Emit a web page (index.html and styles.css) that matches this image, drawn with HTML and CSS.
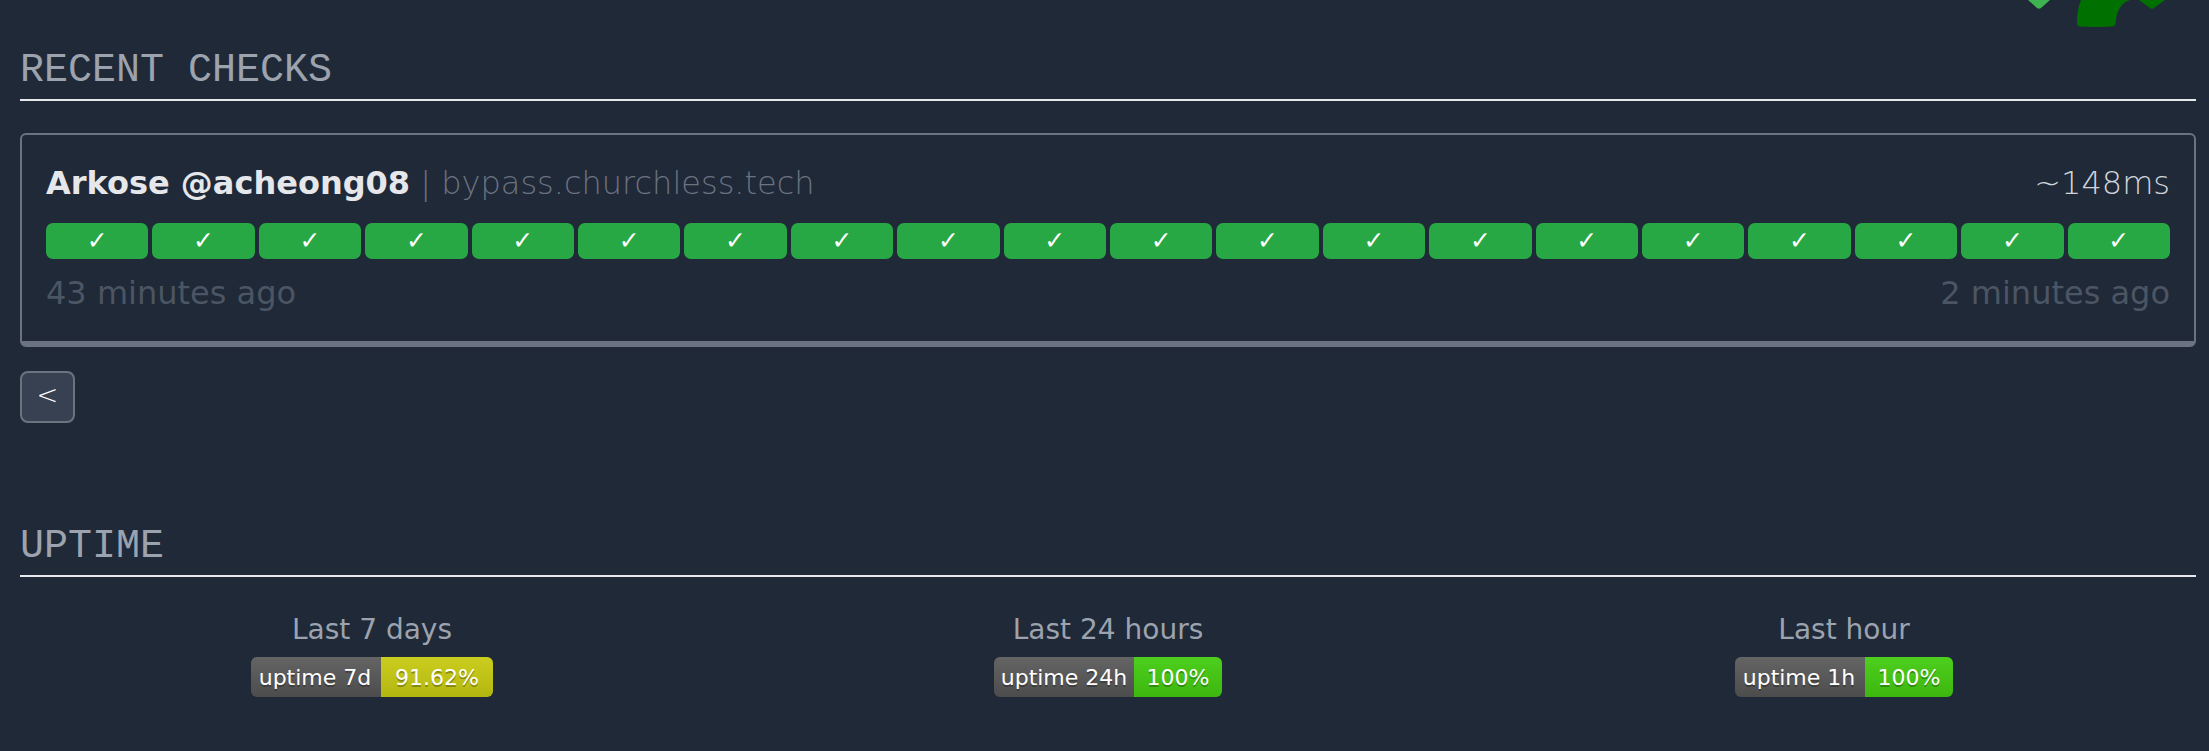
FILE: index.html
```html
<!DOCTYPE html>
<html lang="en">
<head>
    <meta charset="UTF-8">
    <title>Health Dashboard</title>
    <link rel="stylesheet" href="styles.css">
</head>
<body>
    <div class="logo-strip">
        <svg class="logo" viewBox="0 0 176 27" width="176" height="27">
            <path class="logo-light" d="M8 0 L17 8 Q19 9.500 21 8 L30 0 Z"/>
            <path class="logo-dark" d="M61 0 Q57 9 57 23 Q57 26.500 60 26.600 Q78 27.500 92 26.500 Q95.500 26 95.700 23 Q96 11 103 4 Q106 1 110 0 Z"/>
            <path class="logo-dark" d="M119 0 L130 8 Q132 9.500 134 8 L145 0 Z"/>
        </svg>
    </div>

    <h2 class="section-title">RECENT CHECKS</h2>
    <div class="card">
        <div class="card-head">
            <div><span class="name">Arkose @acheong08</span> <span class="sep">|</span> <span class="host">bypass.churchless.tech</span></div>
            <div class="latency">~148ms</div>
        </div>
        <div class="checks">
            <span>✓</span><span>✓</span><span>✓</span><span>✓</span><span>✓</span>
            <span>✓</span><span>✓</span><span>✓</span><span>✓</span><span>✓</span>
            <span>✓</span><span>✓</span><span>✓</span><span>✓</span><span>✓</span>
            <span>✓</span><span>✓</span><span>✓</span><span>✓</span><span>✓</span>
        </div>
        <div class="card-foot">
            <div>43 minutes ago</div>
            <div>2 minutes ago</div>
        </div>
    </div>
    <button class="page-btn">&lt;</button>

    <h2 class="section-title uptime-title">UPTIME</h2>
    <div class="uptime">
        <div class="uptime-col">
            <div class="uptime-label">Last 7 days</div>
            <div class="badge"><span class="badge-l badge-7d">uptime 7d</span><span class="badge-r yellow">91.62%</span></div>
        </div>
        <div class="uptime-col">
            <div class="uptime-label">Last 24 hours</div>
            <div class="badge"><span class="badge-l badge-24h">uptime 24h</span><span class="badge-r green">100%</span></div>
        </div>
        <div class="uptime-col">
            <div class="uptime-label">Last hour</div>
            <div class="badge"><span class="badge-l badge-1h">uptime 1h</span><span class="badge-r green">100%</span></div>
        </div>
    </div>
</body>
</html>
```

FILE: styles.css
```css
*{
    margin: 0;
    padding: 0;
    box-sizing: border-box;
}
body{
    background-color: #1f2937;
    padding: 0 13px 0 20px;
    font-family: "DejaVu Sans", sans-serif;
}
.logo-strip{
    display: flex;
    justify-content: flex-end;
    height: 27px;
}
.logo-light{
    fill: #3fb350;
}
.logo-dark{
    fill: #007000;
}
.section-title{
    margin-top: 22px;
    padding-bottom: 7px;
    border-bottom: 2px solid #e5e7eb;
    font-family: "Liberation Mono", monospace;
    font-size: 40px;
    line-height: 43px;
    font-weight: normal;
    color: #9ca3af;
}
.uptime-title{
    margin-top: 102px;
}
.card{
    margin-top: 32px;
    height: 214px;
    padding: 24px 24px 0;
    border: 2px solid #6b7280;
    border-bottom-width: 6px;
    border-radius: 6px;
}
.card-head{
    display: flex;
    justify-content: space-between;
    font-size: 32px;
    line-height: 48px;
}
.name{
    font-weight: bold;
    color: #e5e7eb;
}
.sep, .host{
    color: #6b7280;
    font-weight: 200;
}
.latency{
    color: #d1d5db;
    font-weight: 200;
}
.checks{
    display: grid;
    grid-template-columns: repeat(20, 1fr);
    gap: 4px;
    margin-top: 16px;
}
.checks span{
    height: 36px;
    border-radius: 7px;
    background-color: #28a745;
    color: #fff;
    font-size: 25px;
    line-height: 36px;
    text-align: center;
}
.card-foot{
    display: flex;
    justify-content: space-between;
    margin-top: 14px;
    font-size: 32px;
    line-height: 40px;
    color: #4b5563;
}
.page-btn{
    display: block;
    width: 55px;
    height: 52px;
    margin-top: 24px;
    padding-bottom: 4px;
    border: 2px solid #6b7280;
    border-radius: 8px;
    background-color: #374151;
    color: #fff;
    font-family: inherit;
    font-size: 26px;
    font-weight: 200;
}
.uptime{
    display: grid;
    grid-template-columns: repeat(3, 1fr);
    gap: 32px;
    margin-top: 33px;
}
.uptime-col{
    display: flex;
    flex-direction: column;
    align-items: center;
}
.uptime-label{
    font-size: 28px;
    line-height: 40px;
    color: #9ca3af;
}
.badge{
    display: flex;
    height: 40px;
    margin-top: 7px;
    border-radius: 6px;
    overflow: hidden;
    color: #fff;
    font-size: 22px;
    line-height: 41px;
    text-align: center;
    text-shadow: 0 2px 0 rgba(1, 1, 1, 0.3);
}
.badge-l{
    padding-right: 2px;
    background-image: linear-gradient(rgba(187, 187, 187, 0.15), rgba(0, 0, 0, 0.1));
    background-color: #555;
}
.badge-r{
    background-image: linear-gradient(rgba(255, 255, 255, 0.05), rgba(0, 0, 0, 0.1));
}
.badge-7d{
    width: 130px;
}
.badge-24h{
    width: 140px;
    padding-right: 0;
}
.badge-1h{
    width: 130px;
}
.badge-r.yellow{
    width: 112px;
    background-color: #c8cb12;
}
.badge-r.green{
    width: 88px;
    background-color: #44cc11;
}
```
